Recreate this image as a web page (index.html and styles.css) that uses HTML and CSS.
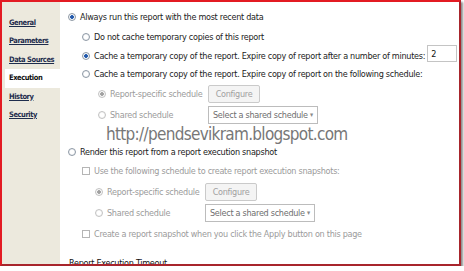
FILE: index.html
```html
<!DOCTYPE html>
<html>
<head>
    <title>Report Properties - Execution</title>
    <link rel="stylesheet" href="styles.css">
</head>
<body>
    <div class="frame">
        <nav class="tabs">
            <a class="tab">General</a>
            <a class="tab">Parameters</a>
            <a class="tab">Data Sources</a>
            <span class="tab tab-current">Execution</span>
            <a class="tab">History</a>
            <a class="tab">Security</a>
        </nav>

        <div class="page">
            <div class="row">
                <span class="radio on"></span>
                <span>Always run this report with the most recent data</span>
            </div>
            <div class="row lvl1">
                <span class="radio"></span>
                <span>Do not cache temporary copies of this report</span>
            </div>
            <div class="row lvl1">
                <span class="radio on"></span>
                <span>Cache a temporary copy of the report. Expire copy of report after a number of minutes:</span>
                <input class="minutes" type="text" value="2">
            </div>
            <div class="row lvl1">
                <span class="radio"></span>
                <span>Cache a temporary copy of the report. Expire copy of report on the following schedule:</span>
            </div>
            <div class="row lvl2 off">
                <span class="radio on"></span>
                <span class="sched-label">Report-specific schedule</span>
                <span class="btn">Configure</span>
            </div>
            <div class="row lvl2 off">
                <span class="radio"></span>
                <span class="sched-label">Shared schedule</span>
                <span class="dropdown">Select a shared schedule <span class="arrow">&#9662;</span></span>
            </div>

            <div class="watermark">http://pendsevikram.blogspot.com</div>

            <div class="row">
                <span class="radio"></span>
                <span>Render this report from a report execution snapshot</span>
            </div>
            <div class="row lvl1 off">
                <span class="check"></span>
                <span>Use the following schedule to create report execution snapshots:</span>
            </div>
            <div class="row lvl2 lower off">
                <span class="radio on"></span>
                <span class="sched-label">Report-specific schedule</span>
                <span class="btn">Configure</span>
            </div>
            <div class="row lvl2 lower off">
                <span class="radio"></span>
                <span class="sched-label">Shared schedule</span>
                <span class="dropdown">Select a shared schedule <span class="arrow">&#9662;</span></span>
            </div>
            <div class="row lvl1 off">
                <span class="check"></span>
                <span>Create a report snapshot when you click the Apply button on this page</span>
            </div>

            <div class="row heading">Report Execution Timeout</div>
        </div>
    </div>
</body>
</html>
```

FILE: styles.css
```css
/* Global */
body {
    margin: 0;
    background-color: #fff;
    font-family: "DejaVu Sans Condensed", "DejaVu Sans", sans-serif;
}

/* Red picture frame with drop shadow */
.frame {
    display: flex;
    width: 461px;
    height: 266px;
    box-sizing: border-box;
    border: 2px solid #e31b23;
    border-right-color: #a8252c;
    border-bottom-color: #a8252c;
    box-shadow: 2px 2px 2px rgba(0, 0, 0, 0.45);
    background-color: #fff;
    overflow: hidden;
}

/* Left tab strip */
.tabs {
    flex: none;
    width: 58px;
    padding-top: 12px;
    background-color: #ece9dd;
    display: flex;
    flex-direction: column;
}

.tab {
    height: 18.4px;
    line-height: 18.4px;
    margin-left: 3px;
    padding-left: 4px;
    font-size: 7.5px;
    font-weight: bold;
    letter-spacing: -0.45px;
    color: #1e2d4d;
    text-decoration: underline;
    white-space: nowrap;
}

.tab-current {
    background-color: #fff;
    color: #111;
    text-decoration: none;
}

/* Options area */
.page {
    flex: 1;
    min-width: 0;
    display: grid;
    grid-template-rows: 20px 20px 18px 18px 21px 21px 18px 18px 20px 21px 21px 21px 37px;
    padding: 5px 0 0 8px;
    font-size: 9px;
    letter-spacing: -0.28px;
    color: #222;
}

.row {
    display: flex;
    align-items: center;
    gap: 4px;
    white-space: nowrap;
}

.lvl1 {
    padding-left: 14px;
}

.lvl2 {
    padding-left: 30px;
}

.lvl2.lower {
    padding-left: 27px;
}

.off {
    color: #9b9b9b;
}

.heading {
    padding-left: 1px;
    color: #111;
}

/* Radio buttons and check boxes */
.radio {
    flex: none;
    width: 8px;
    height: 8px;
    box-sizing: border-box;
    border: 1px solid #8e99a5;
    border-radius: 50%;
    background: radial-gradient(circle, #fff 40%, #dde2e8 100%);
}

.radio.on {
    background: radial-gradient(circle, #1f4f9a 0, #2c63b5 1.6px, #fff 2.2px, #dde2e8 100%);
}

.off .radio {
    border-color: #c3c3c3;
    background: radial-gradient(circle, #fff 40%, #e8e8e8 100%);
}

.off .radio.on {
    background: radial-gradient(circle, #9a9a9a 0, #a8a8a8 1.6px, #fff 2.2px, #e8e8e8 100%);
}

.check {
    flex: none;
    width: 8px;
    height: 8px;
    box-sizing: border-box;
    border: 1px solid #b5b5b5;
    background-color: #fff;
}

/* Schedule controls */
.sched-label {
    width: 94px;
}

.btn {
    box-sizing: border-box;
    width: 52px;
    height: 18px;
    line-height: 16px;
    text-align: center;
    border: 1px solid #cacaca;
    border-radius: 2px;
    background-color: #f4f4f4;
    color: #a0a0a0;
}

.dropdown {
    box-sizing: border-box;
    width: 110px;
    height: 18px;
    line-height: 16px;
    padding-left: 4px;
    border: 1px solid #bcbcbc;
    background-color: #fff;
    color: #6e6e6e;
    position: relative;
}

.arrow {
    position: absolute;
    right: 4px;
    top: 0;
    font-size: 7px;
    color: #8a8a8a;
}

.minutes {
    box-sizing: border-box;
    width: 30px;
    height: 17px;
    margin: 0 0 5px -2px;
    padding: 0 3px;
    border: 1px solid #c4c4c4;
    font-family: inherit;
    font-size: 9px;
    color: #111;
}

/* Blog address stamped across the picture */
.watermark {
    height: 18px;
    line-height: 18px;
    padding-left: 38px;
    font-size: 17px;
    letter-spacing: -0.7px;
    color: #777;
    white-space: nowrap;
}
```
